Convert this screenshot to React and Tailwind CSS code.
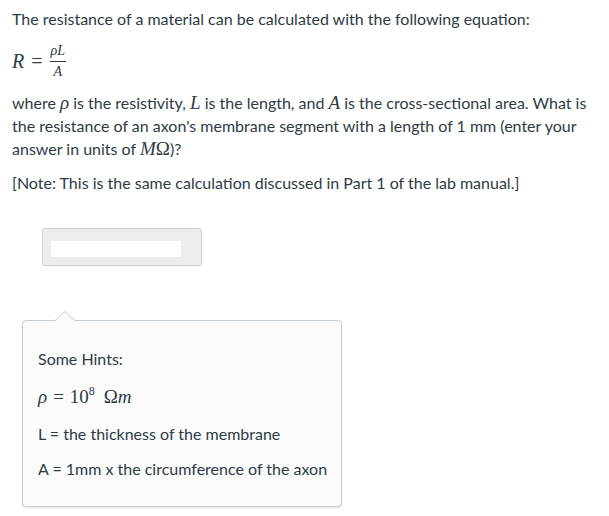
import React from "react";

const M = ({ children, className = "" }) => (
  <span className={`italic ${className}`} style={{ fontFamily: '"Liberation Serif", "DejaVu Serif", serif' }}>{children}</span>
);
const R = ({ children, className = "" }) => (
  <span className={className} style={{ fontFamily: '"Liberation Serif", "DejaVu Serif", serif' }}>{children}</span>
);

export default function App() {
  return (
    <div className="bg-white w-[609px] h-[516px] overflow-hidden text-[#2d3b45] text-[16px] leading-[24px] px-3 pt-[7px]" style={{ fontFamily: 'Lato, "Open Sans", sans-serif' }}>
      <p>The resistance of a material can be calculated with the following equation:</p>
      <div className="flex items-center h-[40px] mt-[10px]">
        <M className="text-[20px]">R</M>
        <R className="text-[20px] mx-[7px]">=</R>
        <span className="inline-flex flex-col items-center leading-none">
          <M className="text-[14px] px-[1px] pb-[3px]">ρL</M>
          <span className="h-px w-full bg-[#2d3b45]"></span>
          <M className="text-[14px] pt-[3px]">A</M>
        </span>
      </div>
      <p className="mt-[10px] leading-[23px]">
        where <M className="text-[19px]">ρ</M> is the resistivity, <M className="text-[19px]">L</M> is the length, and <M className="text-[19px]">A</M> is the cross-sectional area. What is the resistance of an axon's membrane segment with a length of 1 mm (enter your answer in units of <M className="text-[19px]">M</M><R className="text-[19px]">Ω</R>)?
      </p>
      <p className="mt-[11px]">[Note: This is the same calculation discussed in Part 1 of the lab manual.]</p>

      <div className="ml-[30px] mt-[33px] w-[160px] h-[38px] bg-[#ededed] border border-[#cfcfcf] rounded-[3px] pl-[8px] pt-[12px]">
        <div className="w-[130px] h-[16px] bg-white"></div>
      </div>

      <div className="relative ml-[10px] mt-[54px] w-[320px] h-[187px] bg-[#fbfbfc] border border-[#c6cdd2] rounded-[4px] shadow-[0_1px_2px_rgba(0,0,0,0.12)] pl-[15px] pt-[26px]">
        <svg className="absolute left-[31px] top-[-10px]" width="22" height="11" viewBox="0 0 22 11">
          <path d="M0 10.5 L11 0.5 L22 10.5" fill="#fbfbfc" stroke="#c6cdd2" strokeWidth="1" />
        </svg>
        <p>Some Hints:</p>
        <p className="mt-[13px] text-[19px]">
          <M>ρ</M><R className="mx-[6px]">=</R><R>10</R><R className="text-[12px] relative top-[-8px]">8</R> <R className="ml-[4px]">Ω</R><M>m</M>
        </p>
        <p className="mt-[11px]">L = the thickness of the membrane</p>
        <p className="mt-[11px]">A = 1mm x the circumference of the axon</p>
      </div>
    </div>
  );
}
